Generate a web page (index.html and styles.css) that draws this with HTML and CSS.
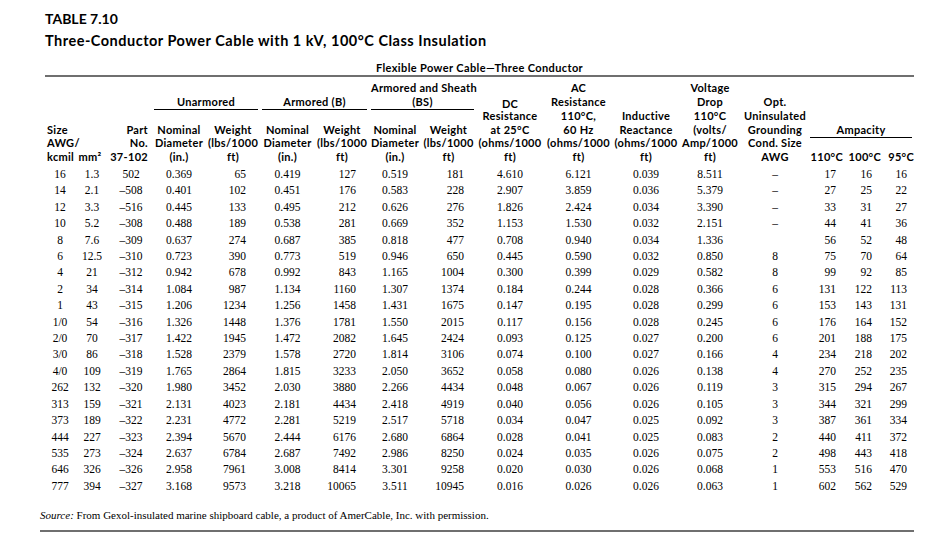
FILE: index.html
```html
<!DOCTYPE html>
<html lang="en">
<head>
<meta charset="utf-8">
<title>Table 7.10</title>
<link rel="stylesheet" href="styles.css">
</head>
<body>
<div class="page">
  <h1 class="title"><span class="title-num">TABLE 7.10</span><span class="title-text">Three-Conductor Power Cable with 1 kV, 100°C Class Insulation</span></h1>
  <div class="table-caption">Flexible Power Cable—Three Conductor</div>
  <table class="cable">
    <colgroup>
      <col class="w30"><col class="w30"><col class="w47">
      <col class="w54"><col class="w54"><col class="w55"><col class="w54"><col class="w52"><col class="w55">
      <col class="w68"><col class="w69"><col class="w66"><col class="w62"><col class="w68">
      <col class="w36"><col class="w36"><col class="w33">
    </colgroup>
    <thead>
      <tr class="hA">
        <th rowspan="3" class="sub left">Size<br>AWG/<br>kcmil</th>
        <th rowspan="3" class="sub">mm²</th>
        <th rowspan="3" class="sub right">Part<br>No.<br>37-102</th>
        <th colspan="2" class="grp"><div class="rule">Unarmored</div></th>
        <th colspan="2" class="grp"><div class="rule">Armored (B)</div></th>
        <th colspan="2" class="grp"><div class="rule">Armored and Sheath<br>(BS)</div></th>
        <th rowspan="3" class="sub"><span class="dc">DC</span>Resistance<br>at 25°C<br>(ohms/1000<br>ft)</th>
        <th rowspan="3" class="sub">AC<br>Resistance<br>110°C,<br>60 Hz<br>(ohms/1000<br>ft)</th>
        <th rowspan="3" class="sub">Inductive<br>Reactance<br>(ohms/1000<br>ft)</th>
        <th rowspan="3" class="sub">Voltage<br>Drop<br>110°C<br>(volts/<br>Amp/1000<br>ft)</th>
        <th rowspan="3" class="sub">Opt.<br>Uninsulated<br>Grounding<br>Cond. Size<br>AWG</th>
        <th colspan="3" rowspan="2" class="grp"><div class="rule amp">Ampacity</div></th>
      </tr>
      <tr class="hB">
        <th rowspan="2" class="sub">Nominal<br>Diameter<br>(in.)</th>
        <th rowspan="2" class="sub">Weight<br>(lbs/1000<br>ft)</th>
        <th rowspan="2" class="sub">Nominal<br>Diameter<br>(in.)</th>
        <th rowspan="2" class="sub">Weight<br>(lbs/1000<br>ft)</th>
        <th rowspan="2" class="sub">Nominal<br>Diameter<br>(in.)</th>
        <th rowspan="2" class="sub">Weight<br>(lbs/1000<br>ft)</th>
      </tr>
      <tr class="hC">
        <th class="sub right t110">110°C</th>
        <th class="sub right t100">100°C</th>
        <th class="sub right t95">95°C</th>
      </tr>
    </thead>
    <tbody>
      <tr><td>16</td><td>1.3</td><td>502</td><td>0.369</td><td>65</td><td>0.419</td><td>127</td><td>0.519</td><td>181</td><td>4.610</td><td>6.121</td><td>0.039</td><td>8.511</td><td>–</td><td>17</td><td>16</td><td>16</td></tr>
      <tr><td>14</td><td>2.1</td><td>–508</td><td>0.401</td><td>102</td><td>0.451</td><td>176</td><td>0.583</td><td>228</td><td>2.907</td><td>3.859</td><td>0.036</td><td>5.379</td><td>–</td><td>27</td><td>25</td><td>22</td></tr>
      <tr><td>12</td><td>3.3</td><td>–516</td><td>0.445</td><td>133</td><td>0.495</td><td>212</td><td>0.626</td><td>276</td><td>1.826</td><td>2.424</td><td>0.034</td><td>3.390</td><td>–</td><td>33</td><td>31</td><td>27</td></tr>
      <tr><td>10</td><td>5.2</td><td>–308</td><td>0.488</td><td>189</td><td>0.538</td><td>281</td><td>0.669</td><td>352</td><td>1.153</td><td>1.530</td><td>0.032</td><td>2.151</td><td>–</td><td>44</td><td>41</td><td>36</td></tr>
      <tr><td>8</td><td>7.6</td><td>–309</td><td>0.637</td><td>274</td><td>0.687</td><td>385</td><td>0.818</td><td>477</td><td>0.708</td><td>0.940</td><td>0.034</td><td>1.336</td><td></td><td>56</td><td>52</td><td>48</td></tr>
      <tr><td>6</td><td>12.5</td><td>–310</td><td>0.723</td><td>390</td><td>0.773</td><td>519</td><td>0.946</td><td>650</td><td>0.445</td><td>0.590</td><td>0.032</td><td>0.850</td><td>8</td><td>75</td><td>70</td><td>64</td></tr>
      <tr><td>4</td><td>21</td><td>–312</td><td>0.942</td><td>678</td><td>0.992</td><td>843</td><td>1.165</td><td>1004</td><td>0.300</td><td>0.399</td><td>0.029</td><td>0.582</td><td>8</td><td>99</td><td>92</td><td>85</td></tr>
      <tr><td>2</td><td>34</td><td>–314</td><td>1.084</td><td>987</td><td>1.134</td><td>1160</td><td>1.307</td><td>1374</td><td>0.184</td><td>0.244</td><td>0.028</td><td>0.366</td><td>6</td><td>131</td><td>122</td><td>113</td></tr>
      <tr><td>1</td><td>43</td><td>–315</td><td>1.206</td><td>1234</td><td>1.256</td><td>1458</td><td>1.431</td><td>1675</td><td>0.147</td><td>0.195</td><td>0.028</td><td>0.299</td><td>6</td><td>153</td><td>143</td><td>131</td></tr>
      <tr><td>1/0</td><td>54</td><td>–316</td><td>1.326</td><td>1448</td><td>1.376</td><td>1781</td><td>1.550</td><td>2015</td><td>0.117</td><td>0.156</td><td>0.028</td><td>0.245</td><td>6</td><td>176</td><td>164</td><td>152</td></tr>
      <tr><td>2/0</td><td>70</td><td>–317</td><td>1.422</td><td>1945</td><td>1.472</td><td>2082</td><td>1.645</td><td>2424</td><td>0.093</td><td>0.125</td><td>0.027</td><td>0.200</td><td>6</td><td>201</td><td>188</td><td>175</td></tr>
      <tr><td>3/0</td><td>86</td><td>–318</td><td>1.528</td><td>2379</td><td>1.578</td><td>2720</td><td>1.814</td><td>3106</td><td>0.074</td><td>0.100</td><td>0.027</td><td>0.166</td><td>4</td><td>234</td><td>218</td><td>202</td></tr>
      <tr><td>4/0</td><td>109</td><td>–319</td><td>1.765</td><td>2864</td><td>1.815</td><td>3233</td><td>2.050</td><td>3652</td><td>0.058</td><td>0.080</td><td>0.026</td><td>0.138</td><td>4</td><td>270</td><td>252</td><td>235</td></tr>
      <tr><td>262</td><td>132</td><td>–320</td><td>1.980</td><td>3452</td><td>2.030</td><td>3880</td><td>2.266</td><td>4434</td><td>0.048</td><td>0.067</td><td>0.026</td><td>0.119</td><td>3</td><td>315</td><td>294</td><td>267</td></tr>
      <tr><td>313</td><td>159</td><td>–321</td><td>2.131</td><td>4023</td><td>2.181</td><td>4434</td><td>2.418</td><td>4919</td><td>0.040</td><td>0.056</td><td>0.026</td><td>0.105</td><td>3</td><td>344</td><td>321</td><td>299</td></tr>
      <tr><td>373</td><td>189</td><td>–322</td><td>2.231</td><td>4772</td><td>2.281</td><td>5219</td><td>2.517</td><td>5718</td><td>0.034</td><td>0.047</td><td>0.025</td><td>0.092</td><td>3</td><td>387</td><td>361</td><td>334</td></tr>
      <tr><td>444</td><td>227</td><td>–323</td><td>2.394</td><td>5670</td><td>2.444</td><td>6176</td><td>2.680</td><td>6864</td><td>0.028</td><td>0.041</td><td>0.025</td><td>0.083</td><td>2</td><td>440</td><td>411</td><td>372</td></tr>
      <tr><td>535</td><td>273</td><td>–324</td><td>2.637</td><td>6784</td><td>2.687</td><td>7492</td><td>2.986</td><td>8250</td><td>0.024</td><td>0.035</td><td>0.026</td><td>0.075</td><td>2</td><td>498</td><td>443</td><td>418</td></tr>
      <tr><td>646</td><td>326</td><td>–326</td><td>2.958</td><td>7961</td><td>3.008</td><td>8414</td><td>3.301</td><td>9258</td><td>0.020</td><td>0.030</td><td>0.026</td><td>0.068</td><td>1</td><td>553</td><td>516</td><td>470</td></tr>
      <tr><td>777</td><td>394</td><td>–327</td><td>3.168</td><td>9573</td><td>3.218</td><td>10065</td><td>3.511</td><td>10945</td><td>0.016</td><td>0.026</td><td>0.026</td><td>0.063</td><td>1</td><td>602</td><td>562</td><td>529</td></tr>
    </tbody>
  </table>
  <p class="source"><em>Source:</em> From Gexol-insulated marine shipboard cable, a product of AmerCable, Inc. with permission.</p>
</div>
</body>
</html>
```

FILE: styles.css
```css
* { box-sizing: border-box; }

body {
  margin: 0;
  background: #ffffff;
  color: #000000;
}

.page {
  width: 933px;
  padding: 8px 19px 0 45px;
}

.title {
  margin: 0;
  font-family: Lato, "Open Sans", sans-serif;
  font-weight: 700;
  line-height: 22px;
}

.title-num {
  display: block;
  font-size: 14px;
}

.title-text {
  display: block;
  font-size: 14.5px;
  letter-spacing: 0.5px;
}

.table-caption {
  margin-top: 8px;
  font-family: Lato, "Open Sans", sans-serif;
  font-weight: 700;
  font-size: 11px;
  letter-spacing: 0.38px;
  line-height: 15px;
  text-align: center;
  border-bottom: 2px solid #6f6f6f;
}

.cable {
  width: 869px;
  table-layout: fixed;
  border-collapse: separate;
  border-spacing: 0;
}

.w30 { width: 30px; }
.w33 { width: 33px; }
.w36 { width: 36px; }
.w47 { width: 47px; }
.w52 { width: 52px; }
.w54 { width: 54px; }
.w55 { width: 55px; }
.w62 { width: 62px; }
.w66 { width: 66px; }
.w68 { width: 68px; }
.w69 { width: 69px; }

.cable th {
  padding: 0;
  font-family: Lato, "Open Sans", sans-serif;
  font-weight: 700;
  font-size: 11px;
  letter-spacing: 0.3px;
  line-height: 13.8px;
  text-align: center;
  vertical-align: bottom;
  white-space: nowrap;
}

.hA { height: 33px; }
.hB { height: 28px; }
.hC { height: 28px; }

.cable th.sub { padding-bottom: 2px; }
.cable th.left { text-align: left; padding-left: 2px; }
.cable th.right { text-align: right; padding-right: 4px; }
.cable th.t110 { padding-right: 2px; }
.cable th.t100 { padding-right: 0; }
.cable th.t95 { padding-right: 0; }

.dc {
  display: block;
  line-height: 11px;
}

.rule {
  margin: 0 2px;
  border-bottom: 1px solid #000000;
}

.rule.amp { margin: 0 2px 0 1px; }

.cable td {
  padding: 0;
  font-family: "Liberation Serif", "Times New Roman", serif;
  font-size: 11.5px;
  line-height: 16.4px;
  height: 16.4px;
  text-align: center;
  white-space: nowrap;
}

.cable td:nth-child(2) { padding-left: 4px; }
.cable td:nth-child(3) { padding-left: 5px; }
.cable td:nth-child(5) { text-align: right; padding-right: 14px; }
.cable td:nth-child(7) { text-align: right; padding-right: 13px; }
.cable td:nth-child(9) { text-align: right; padding-right: 12px; }
.cable td:nth-child(15) { text-align: right; padding-right: 9px; }
.cable td:nth-child(16) { text-align: right; padding-right: 9px; }
.cable td:nth-child(17) { text-align: right; padding-right: 7px; }

.source {
  width: 874px;
  margin: 14px 0 0 -5px;
  padding-bottom: 8px;
  font-family: "Liberation Serif", "Times New Roman", serif;
  font-size: 11px;
  line-height: 14px;
  border-bottom: 2px solid #6f6f6f;
}
```
